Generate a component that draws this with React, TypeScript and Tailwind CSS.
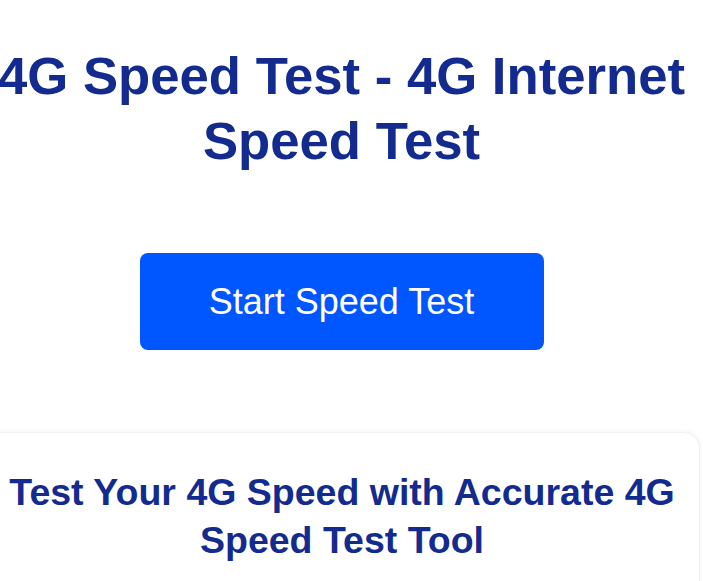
import React from "react";

export default function App() {
  return (
    <div className="min-h-screen bg-white overflow-hidden font-['Liberation_Sans',Arial,sans-serif]">
      <div className="w-[683px] flex flex-col items-center">
        <h1 className="mt-[43px] w-[700px] shrink-0 text-center text-[52.7px] leading-[65px] font-bold text-[#132b8f]">
          4G Speed Test - 4G Internet Speed Test
        </h1>

        <button className="mt-[80px] w-[404px] h-[97px] rounded-lg bg-[#0056ff] text-white text-[36px] flex items-center justify-center">
          Start Speed Test
        </button>

        <section className="self-start mt-[82px] -ml-[16px] w-[716px] rounded-2xl bg-white border border-[#f0f0f0] shadow-[0_0_6px_rgba(0,0,0,0.06)] pt-[35px] pb-10">
          <h2 className="text-center text-[37.5px] leading-[48px] font-bold text-[#132b8f]">
            Test Your 4G Speed with Accurate 4G Speed Test Tool
          </h2>
        </section>
      </div>
    </div>
  );
}
